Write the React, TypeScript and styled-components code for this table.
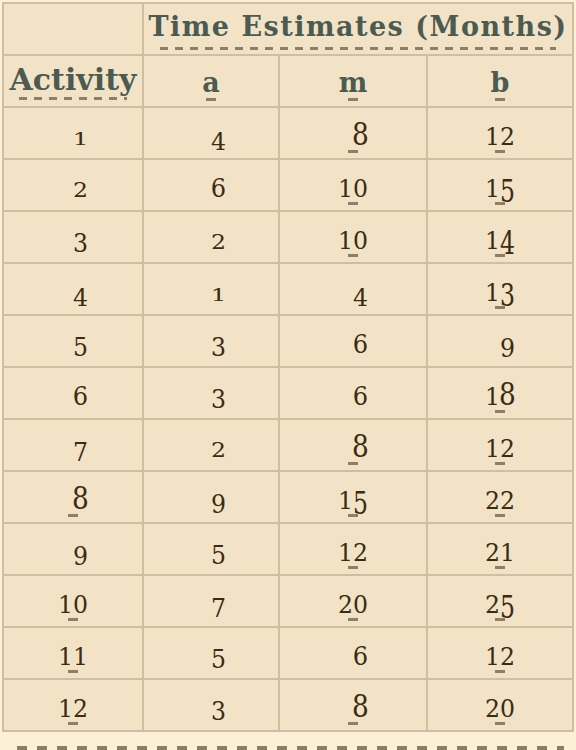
import React from 'react'
import styled, { createGlobalStyle } from 'styled-components'

const GlobalStyle = createGlobalStyle`
  html, body {
    margin: 0;
    padding: 0;
    background: #fdf0d8;
  }
  body {
    font-family: 'DejaVu Serif', 'Liberation Serif', serif;
  }
`

type Row = [number, number, number, number]

const rows: Row[] = [
  [1, 4, 8, 12],
  [2, 6, 10, 15],
  [3, 2, 10, 14],
  [4, 1, 4, 13],
  [5, 3, 6, 9],
  [6, 3, 6, 18],
  [7, 2, 8, 12],
  [8, 9, 15, 22],
  [9, 5, 12, 21],
  [10, 7, 20, 25],
  [11, 5, 6, 12],
  [12, 3, 8, 20],
]

const colWidths = [140, 136, 148, 146]

// old-style figure look, per digit: [scaleX, scaleY, drop px]
type Shape = [number, number, number]
const shapes: Record<'plain' | 'marked', Record<string, Shape>> = {
  plain: {
    '0': [1, 0.72, 0],
    '1': [1.05, 0.74, 0],
    '2': [1, 0.85, 0],
    '3': [1, 1.12, 3],
    '4': [1, 1.06, 5],
    '5': [1, 1.12, 3],
    '6': [1.02, 1.1, 0],
    '7': [1, 1.1, 4],
    '8': [1.02, 1.1, 0],
    '9': [1, 1.1, 4],
  },
  marked: {
    '0': [1, 1.05, 0],
    '1': [1, 1.05, 0],
    '2': [1, 1.05, 0],
    '3': [1, 1.34, 5.5],
    '4': [1, 1.34, 5.5],
    '5': [1, 1.34, 5.5],
    '6': [1.1, 1.34, 0],
    '7': [1, 1.34, 5.5],
    '8': [1.12, 1.34, 0],
    '9': [1, 1.34, 5.5],
  },
}

const DIGIT_SIZE = 23.6
const DIGIT_W = 15

const Digit = styled.span<{ $sx: number; $sy: number; $drop: number }>`
  display: inline-block;
  width: ${DIGIT_W}px;
  font-size: ${DIGIT_SIZE}px;
  line-height: 1;
  text-align: center;
  transform-origin: 50% ${0.846 * DIGIT_SIZE}px;
  transform: translateY(${({ $drop }) => $drop}px)
    scale(${({ $sx }) => $sx}, ${({ $sy }) => $sy});
`

const Pad = styled.span`
  display: inline-block;
  width: ${DIGIT_W}px;
`

const Num = styled.span<{ $marked: boolean }>`
  color: #3b2b13;
  background: ${({ $marked }) =>
    $marked ? 'linear-gradient(#8e7f62, #8e7f62) center bottom / 10px 3px no-repeat' : 'none'};
`

const Page = styled.div`
  padding: 2px 2px 0;
`

const Table = styled.table`
  border-collapse: collapse;
  table-layout: fixed;
  width: 572px;
  background: #f2e2c6;
`

const Col = styled.col<{ $w: number }>`
  width: ${({ $w }) => $w}px;
`

const Cell = styled.td`
  border: 2px solid #cfbfa0;
  padding: 0;
  height: 50px;
  line-height: 50px;
  vertical-align: top;
  text-align: center;
  white-space: nowrap;
  font-size: 34px;
`

const HeadCell = styled(Cell).attrs({ as: 'th' })<{ $size: number }>`
  font-size: ${({ $size }) => $size}px;
  font-weight: bold;
  color: #4b5b51;
`

const Dashed = styled.span<{ $inset: number; $pad: number; $shift: number; $track?: number }>`
  line-height: 1;
  letter-spacing: ${({ $track }) => $track ?? 0}px;
  vertical-align: ${({ $shift }) => $shift}px;
  padding-bottom: ${({ $pad }) => $pad}px;
  background-image: repeating-linear-gradient(
    90deg,
    #8e7f62 0 8px,
    transparent 8px 15px
  );
  background-repeat: no-repeat;
  background-size: calc(100% - ${({ $inset }) => $inset}px) 3px;
  background-position: center bottom;
`

const Letter = styled.span`
  line-height: 1;
  vertical-align: -1.7px;
  padding-bottom: 3px;
  background: linear-gradient(#8e7f62, #8e7f62) center bottom / 10px 3px no-repeat;
`

const Footer = styled.div`
  margin: 14px 10px 0 15px;
  height: 5px;
  background: repeating-linear-gradient(90deg, #8e7f62 0 10px, transparent 10px 20px);
`

const Value = ({ n }: { n: number }) => {
  const marked = n >= 10 || n === 8
  const text = String(n)
  const set = shapes[marked ? 'marked' : 'plain']
  return (
    <Num $marked={marked}>
      {text.length === 1 && <Pad />}
      {text.split('').map((d, i) => {
        const [sx, sy, drop] = set[d]
        return (
          <Digit key={i} $sx={sx} $sy={sy} $drop={drop}>
            {d}
          </Digit>
        )
      })}
    </Num>
  )
}

export default function App() {
  return (
    <Page>
      <GlobalStyle />
      <Table>
        <colgroup>
          {colWidths.map((w, i) => (
            <Col key={i} $w={w} />
          ))}
        </colgroup>
        <thead>
          <tr>
            <HeadCell $size={26} />
            <HeadCell $size={27} colSpan={3}>
              <Dashed $inset={24} $pad={8} $shift={2} $track={1.5}>
                Time Estimates (Months)
              </Dashed>
            </HeadCell>
          </tr>
          <tr>
            <HeadCell $size={30}>
              <Dashed $inset={18} $pad={3} $shift={1.4}>
                Activity
              </Dashed>
            </HeadCell>
            {['a', 'm', 'b'].map((l) => (
              <HeadCell key={l} $size={27}>
                <Letter>{l}</Letter>
              </HeadCell>
            ))}
          </tr>
        </thead>
        <tbody>
          {rows.map((r) => (
            <tr key={r[0]}>
              {r.map((n, i) => (
                <Cell key={i}>
                  <Value n={n} />
                </Cell>
              ))}
            </tr>
          ))}
        </tbody>
      </Table>
      <Footer />
    </Page>
  )
}
